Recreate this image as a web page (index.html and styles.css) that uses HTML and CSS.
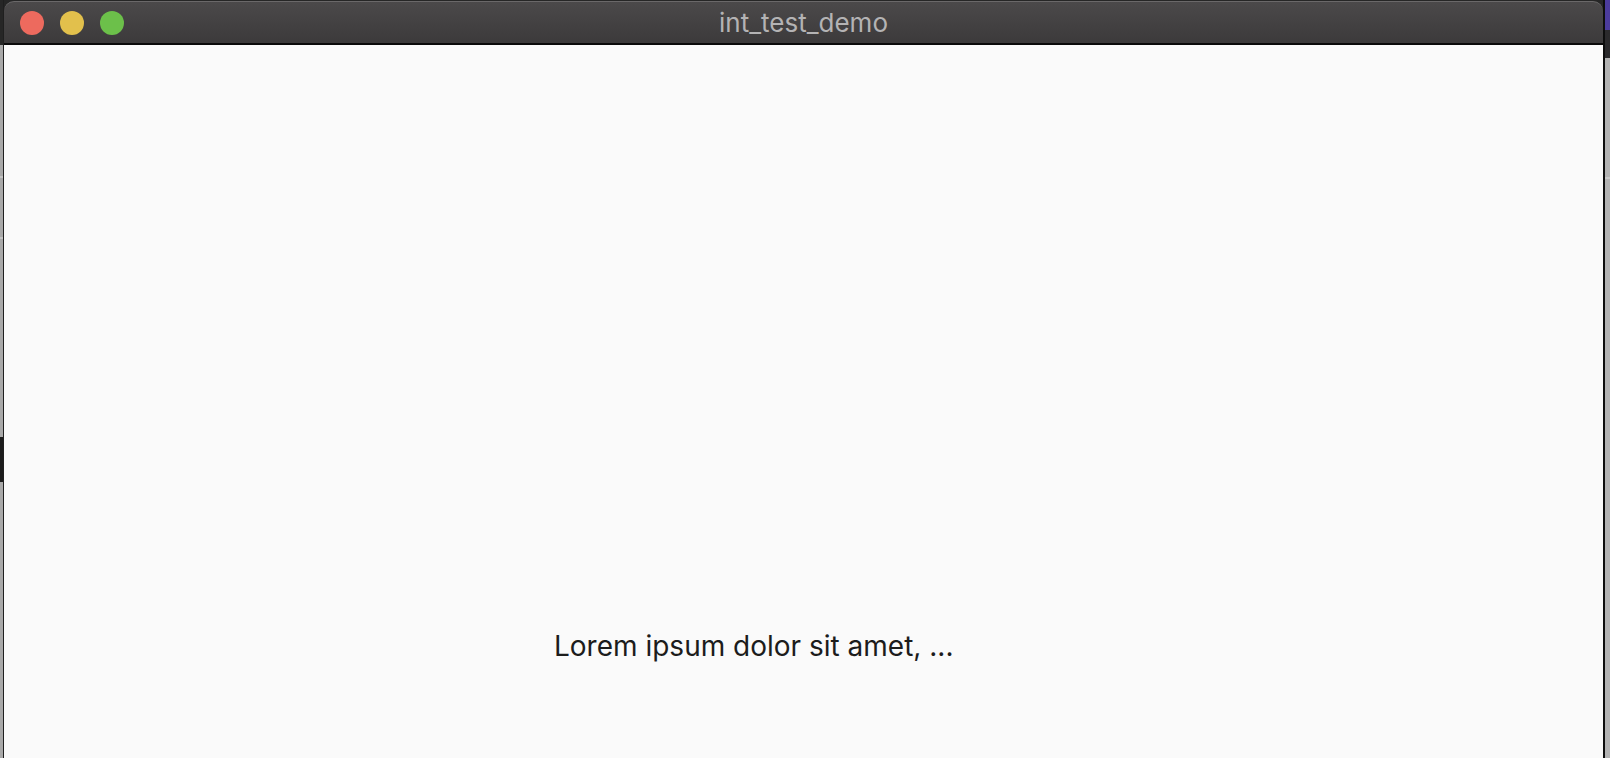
FILE: index.html
```html
<!DOCTYPE html>
<html lang="en">
<head>
<meta charset="utf-8">
<title>int_test_demo</title>
<link rel="stylesheet" href="styles.css">
</head>
<body>
<div class="desktop">
  <div class="side side-left"></div>
  <div class="window">
    <div class="titlebar">
      <div class="lights">
        <span class="light red"></span>
        <span class="light yellow"></span>
        <span class="light green"></span>
      </div>
      <div class="title">int_test_demo</div>
    </div>
    <div class="content">
      <p class="lorem">Lorem ipsum dolor sit amet, ...</p>
    </div>
  </div>
  <div class="side side-right"></div>
</div>
</body>
</html>
```
FILE: styles.css
```css
html, body {
  margin: 0;
  padding: 0;
  width: 1610px;
  height: 758px;
  overflow: hidden;
  background: #aaaaaa;
}

.desktop {
  display: flex;
  width: 1610px;
  height: 758px;
}

.side {
  flex: none;
  height: 100%;
}

.side-left {
  width: 3px;
  background:
    linear-gradient(to bottom,
      #262626 0, #262626 45px,
      #a9a9a9 45px, #a9a9a9 176px,
      #c4c4c4 176px, #c4c4c4 178px,
      #a9a9a9 178px, #a9a9a9 237px,
      #c4c4c4 237px, #c4c4c4 239px,
      #a9a9a9 239px, #a9a9a9 437px,
      #1c1c1c 437px, #1c1c1c 482px,
      #a9a9a9 482px);
}

.side-right {
  width: 5px;
  background:
    linear-gradient(to bottom,
      #4b3b9c 0, #4b3b9c 30px,
      #2b2a2c 30px, #2b2a2c 58px,
      #b3b3b3 58px, #b3b3b3 177px,
      #c8c8c8 177px, #c8c8c8 179px,
      #b3b3b3 179px);
}

.window {
  flex: none;
  width: 1599px;
  height: 100%;
  border-left: 1px solid #1f1f1f;
  border-right: 2px solid #0d0d0d;
  display: flex;
  flex-direction: column;
  background: #262626;
}

.titlebar {
  flex: none;
  height: 41px;
  margin-top: 1px;
  border-top: 1px solid #6a6869;
  border-radius: 10px 10px 0 0;
  background: linear-gradient(to bottom, #4b494a, #3c3a3b);
  border-bottom: 2px solid #0a0a0a;
  position: relative;
  display: flex;
  align-items: center;
  justify-content: center;
}

.lights {
  position: absolute;
  left: 16px;
  top: 9px;
  display: flex;
  gap: 16px;
}

.light {
  width: 24px;
  height: 24px;
  border-radius: 50%;
  display: block;
}

.red { background: #ed6a5e; }
.yellow { background: #e2c04c; }
.green { background: #6cc04a; }

.title {
  font-family: Inter, "Liberation Sans", sans-serif;
  font-size: 26px;
  color: #b4b3b4;
  margin-top: 0;
}

.content {
  flex: 1;
  background: #fafafa;
  display: flex;
  flex-direction: column;
}

.lorem {
  margin: 584px 0 0 0;
  padding-left: 550px;
  font-family: Inter, "Liberation Sans", sans-serif;
  font-size: 28px;
  line-height: 34px;
  color: #1c1c1c;
}
```
